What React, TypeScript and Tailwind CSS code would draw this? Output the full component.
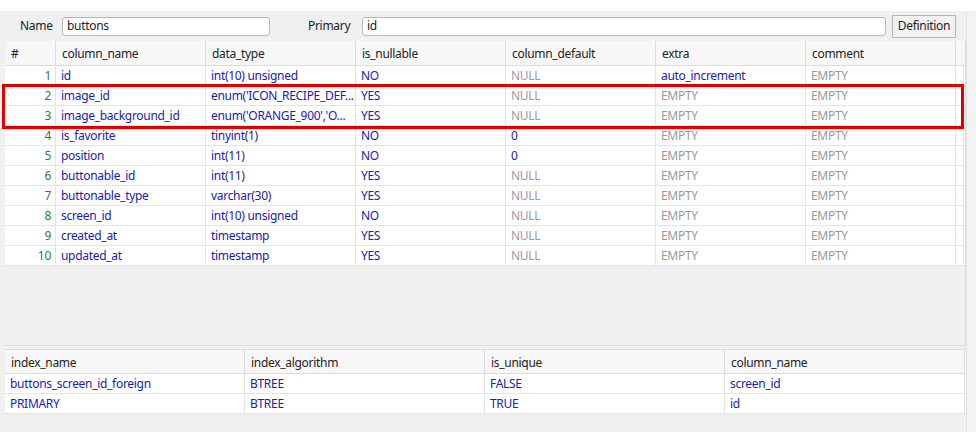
import React from "react"

const GREEN = "text-[#2f7d32]"
const BLUE = "text-[#2020b0]"
const GRAY = "text-[#9a9a9a]"

type Cell = { v: string; gray?: boolean }

const rows: Cell[][] = [
  [{ v: "id" }, { v: "int(10) unsigned" }, { v: "NO" }, { v: "NULL", gray: true }, { v: "auto_increment" }, { v: "EMPTY", gray: true }],
  [{ v: "image_id" }, { v: "enum('ICON_RECIPE_DEF..." }, { v: "YES" }, { v: "NULL", gray: true }, { v: "EMPTY", gray: true }, { v: "EMPTY", gray: true }],
  [{ v: "image_background_id" }, { v: "enum('ORANGE_900','O..." }, { v: "YES" }, { v: "NULL", gray: true }, { v: "EMPTY", gray: true }, { v: "EMPTY", gray: true }],
  [{ v: "is_favorite" }, { v: "tinyint(1)" }, { v: "NO" }, { v: "0" }, { v: "EMPTY", gray: true }, { v: "EMPTY", gray: true }],
  [{ v: "position" }, { v: "int(11)" }, { v: "NO" }, { v: "0" }, { v: "EMPTY", gray: true }, { v: "EMPTY", gray: true }],
  [{ v: "buttonable_id" }, { v: "int(11)" }, { v: "YES" }, { v: "NULL", gray: true }, { v: "EMPTY", gray: true }, { v: "EMPTY", gray: true }],
  [{ v: "buttonable_type" }, { v: "varchar(30)" }, { v: "YES" }, { v: "NULL", gray: true }, { v: "EMPTY", gray: true }, { v: "EMPTY", gray: true }],
  [{ v: "screen_id" }, { v: "int(10) unsigned" }, { v: "NO" }, { v: "NULL", gray: true }, { v: "EMPTY", gray: true }, { v: "EMPTY", gray: true }],
  [{ v: "created_at" }, { v: "timestamp" }, { v: "YES" }, { v: "NULL", gray: true }, { v: "EMPTY", gray: true }, { v: "EMPTY", gray: true }],
  [{ v: "updated_at" }, { v: "timestamp" }, { v: "YES" }, { v: "NULL", gray: true }, { v: "EMPTY", gray: true }, { v: "EMPTY", gray: true }],
]

const headers = ["column_name", "data_type", "is_nullable", "column_default", "extra", "comment"]

const indexes = [
  ["buttons_screen_id_foreign", "BTREE", "FALSE", "screen_id"],
  ["PRIMARY", "BTREE", "TRUE", "id"],
]

export default function App(){

  return(

    <div className="w-[976px] h-[432px] bg-white overflow-hidden relative text-[12px] tracking-[-0.3px] text-[#222]" style={{ fontFamily: "'Noto Sans', 'Open Sans', sans-serif" }}>

      <div className="mt-[11px] h-[421px] bg-[#f0f0f0] flex">

        <div className="w-[966px] pl-[5px] flex flex-col">

          {/* TOOLBAR */}

          <div className="h-[30px] flex items-center">
            <span className="ml-[15px] w-[42px]">Name</span>
            <div className="w-[208px] h-[19px] bg-white border border-[#b8b8b8] rounded-[3px] px-[4px] flex items-center leading-none">buttons</div>
            <span className="ml-[38px] w-[54px]">Primary</span>
            <div className="w-[524px] h-[19px] bg-white border border-[#b8b8b8] rounded-[3px] px-[4px] flex items-center leading-none">id</div>
            <div className="ml-[6px] w-[64px] h-[23px] bg-[#f2f2f2] border border-[#b4b4b4] flex items-center justify-center leading-none">Definition</div>
          </div>

          {/* COLUMNS TABLE */}

          <div className="h-[305px] border border-[#dcdcdc] border-t-0 border-l-0 flex flex-col">

            <div className="h-[25px] flex bg-[#f7f7f7] border-b border-[#dcdcdc]">
              <div className="w-[51px] border-r border-[#dcdcdc] px-[6px] pt-[2px] flex items-center">#</div>
              {headers.map((h)=>(
                <div key={h} className="w-[150px] border-r border-[#dcdcdc] px-[6px] pt-[2px] flex items-center">{h}</div>
              ))}
              <div className="w-[9px]" />
            </div>

            {rows.map((r, i)=>(
              <div key={i} className="h-[20px] flex bg-white border-b border-[#e4e4e4]">
                <div className={`w-[51px] border-r border-[#e4e4e4] pr-[4px] flex items-center justify-end ${GREEN}`}>{i + 1}</div>
                {r.map((c, j)=>(
                  <div key={j} className={`w-[150px] border-r border-[#e4e4e4] px-[5px] flex items-center whitespace-nowrap overflow-hidden ${c.gray ? GRAY : BLUE}`}>{c.v}</div>
                ))}
                <div className="w-[8px] border-r border-[#e4e4e4]" />
              </div>
            ))}

          </div>

          {/* INDEX TABLE */}

          <div className="mt-[3px] flex-1 flex flex-col">

            <div className="h-[25px] flex bg-[#f7f7f7] border-b border-t border-[#dcdcdc]">
              {["index_name", "index_algorithm", "is_unique", "column_name"].map((h)=>(
                <div key={h} className="w-[240px] border-r border-[#dcdcdc] px-[6px] pt-[2px] flex items-center">{h}</div>
              ))}
            </div>

            {indexes.map((r, i)=>(
              <div key={i} className="h-[20px] flex bg-white border-b border-[#e4e4e4]">
                {r.map((c, j)=>(
                  <div key={j} className={`w-[240px] border-r border-[#e4e4e4] px-[5px] flex items-center ${BLUE}`}>{c}</div>
                ))}
              </div>
            ))}

          </div>

        </div>

        <div className="flex-1 border-l border-[#e2e2e2] bg-[#f3f3f3]" />

      </div>

      {/* HIGHLIGHT */}

      <div className="absolute left-[2px] top-[84px] w-[962px] h-[45px] border-[3px] border-[#e00000] pointer-events-none" />

    </div>
  )
}
